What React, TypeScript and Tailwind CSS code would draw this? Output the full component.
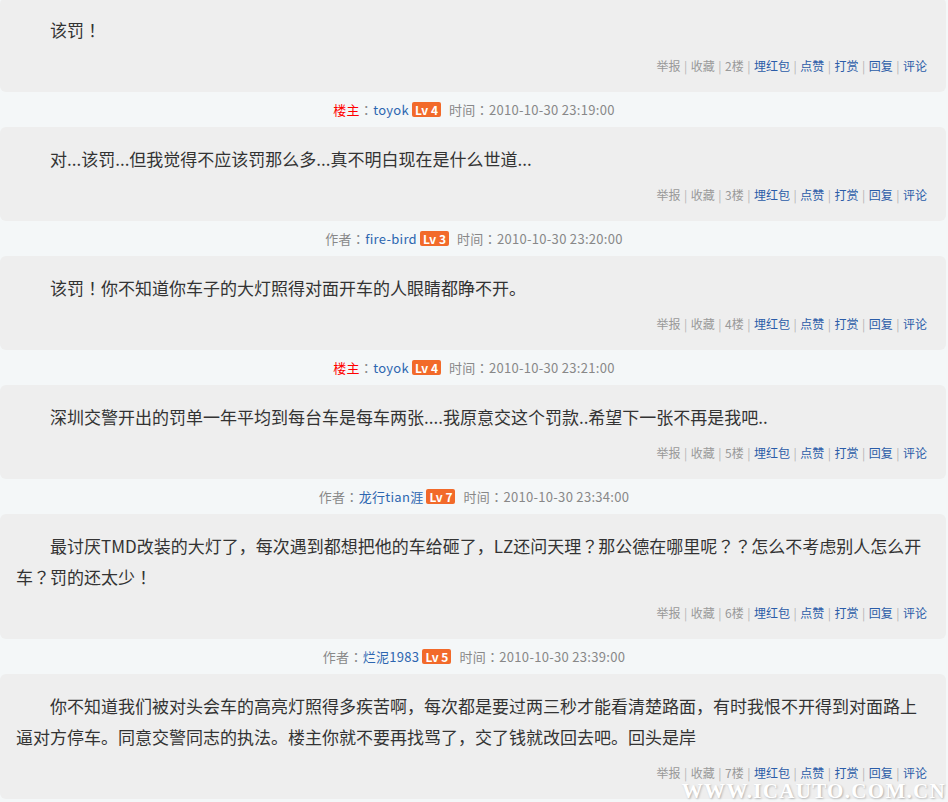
type Post = {
  floor: number;
  text: string;
  role?: '楼主' | '作者';
  name?: string;
  lv?: number;
  time?: string;
};

const posts: Post[] = [
  { floor: 2, text: '该罚！', role: '楼主', name: 'toyok', lv: 4, time: '2010-10-30 23:19:00' },
  {
    floor: 3,
    text: '对...该罚...但我觉得不应该罚那么多...真不明白现在是什么世道...',
    role: '作者',
    name: 'fire-bird',
    lv: 3,
    time: '2010-10-30 23:20:00',
  },
  {
    floor: 4,
    text: '该罚！你不知道你车子的大灯照得对面开车的人眼睛都睁不开。',
    role: '楼主',
    name: 'toyok',
    lv: 4,
    time: '2010-10-30 23:21:00',
  },
  {
    floor: 5,
    text: '深圳交警开出的罚单一年平均到每台车是每车两张....我原意交这个罚款..希望下一张不再是我吧..',
    role: '作者',
    name: '龙行tian涯',
    lv: 7,
    time: '2010-10-30 23:34:00',
  },
  {
    floor: 6,
    text: '最讨厌TMD改装的大灯了，每次遇到都想把他的车给砸了，LZ还问天理？那公德在哪里呢？？怎么不考虑别人怎么开车？罚的还太少！',
    role: '作者',
    name: '烂泥1983',
    lv: 5,
    time: '2010-10-30 23:39:00',
  },
  {
    floor: 7,
    text: '你不知道我们被对头会车的高亮灯照得多疾苦啊，每次都是要过两三秒才能看清楚路面，有时我恨不开得到对面路上逼对方停车。同意交警同志的执法。楼主你就不要再找骂了，交了钱就改回去吧。回头是岸',
  },
];

// ！ and ？ sit centred in their cell in the original font
function Body({ text }: { text: string }) {
  const parts = text.split(/([！？：])/);
  return (
    <>
      {parts.map((s, i) =>
        /^[！？：]$/.test(s) ? (
          <span key={i} style={{ fontFamily: '"Noto Sans CJK JP", sans-serif' }}>
            {s}
          </span>
        ) : (
          s
        ),
      )}
    </>
  );
}

function Footer({ floor }: { floor: number }) {
  const sep = <span className="mx-[3.5px] text-[#b5b5b5]">|</span>;
  return (
    <div className="mt-[11px] flex justify-end pr-[19px] text-[12px] leading-[20px]">
      <span className="text-[#999]">举报</span>
      {sep}
      <span className="text-[#999]">收藏</span>
      {sep}
      <span className="text-[#999]">{floor}楼</span>
      {sep}
      <a className="text-[#2b5ca8]">埋红包</a>
      {sep}
      <a className="text-[#2b5ca8]">点赞</a>
      {sep}
      <a className="text-[#2b5ca8]">打赏</a>
      {sep}
      <a className="text-[#2b5ca8]">回复</a>
      {sep}
      <a className="text-[#2b5ca8]">评论</a>
    </div>
  );
}

function Meta({ post }: { post: Post }) {
  return (
    <div className="flex h-[35px] items-center justify-center text-[13px] tracking-[0.3px] text-[#888]">
      <span className={post.role === '楼主' ? 'text-[#f00]' : 'text-[#888]'}>{post.role}</span>
      <Body text="：" />
      <a className="text-[#2d66b0]">{post.name}</a>
      <span className="ml-[3px] rounded-[2px] bg-[#f26a2a] px-[3px] text-[12px] leading-[15px] font-bold tracking-normal text-white">
        Lv {post.lv}
      </span>
      <span className="ml-[8px]">
        时间<Body text="：" />
        {post.time}
      </span>
    </div>
  );
}

export default function App() {
  return (
    <div
      className="relative min-h-[802px] overflow-hidden bg-[#f4f7f8] text-[#333] [text-spacing-trim:space-all]"
      style={{ fontFamily: '"Noto Sans CJK SC", "Open Sans", sans-serif' }}
    >
      <div className="-mt-[2px]">
        {posts.map((p) => (
          <div key={p.floor}>
            <div className="w-[946px] rounded-[6px] bg-[#eeeeee] pt-4 pb-4">
              <p className="pl-[16px] pr-[16px] indent-[2em] text-[17px] leading-[31px]">
                <Body text={p.text} />
              </p>
              <Footer floor={p.floor} />
            </div>
            {p.role && <Meta post={p} />}
          </div>
        ))}
      </div>

      {/* watermark */}
      <div
        className="absolute right-[2px] bottom-[-5px] text-[21px] font-bold tracking-[1.3px] text-white [text-shadow:1px_1px_2px_rgba(0,0,0,0.25)]"
        style={{ fontFamily: '"Liberation Serif", serif' }}
      >
        WWW.ICAUTO.COM.CN
      </div>
    </div>
  );
}
